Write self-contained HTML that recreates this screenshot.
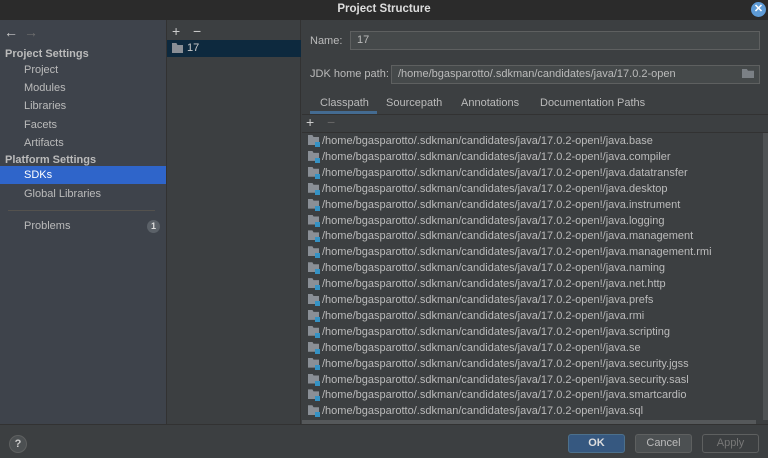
<!DOCTYPE html>
<html><head><meta charset="utf-8"><style>
*{margin:0;padding:0;box-sizing:border-box}
body{width:768px;height:458px;overflow:hidden;background:#3c3f41;font-family:"Liberation Sans",sans-serif;font-size:11px;color:#bbbbbb;position:relative}
.a{position:absolute;white-space:nowrap}
.title{left:0;top:0;width:768px;height:20px;background:#2b2b2b;color:#ddd;font-weight:bold;text-align:center;line-height:19px;font-size:11.5px}
.side{left:0;top:20px;width:166px;height:404px;background:#3e434b}
.mid{left:166px;top:20px;width:135px;height:404px;background:#3c3f41;border-left:1px solid #323232;border-right:1px solid #323232}
.in{background:#45494a;border:1px solid #5e6060;color:#bbb;padding-left:6px;line-height:17px}
.row{left:308px;height:16px;line-height:16px;font-size:11px;color:#bbb}
.ic{display:inline-block;width:11px;height:10px;background:#8a8f96;position:relative;vertical-align:-1px;margin-right:3px;clip-path:polygon(0 0,40% 0,50% 20%,100% 20%,100% 100%,0 100%)}
.ic2{position:absolute;width:6px;height:6px;background:#3592c4}
.btn{top:434px;height:19px;width:57px;border:1px solid #5e6060;border-radius:3px;text-align:center;line-height:17px;background:#4c5052}
</style></head><body>
<div class="a title">Project Structure</div>
<div class="a" style="left:751px;top:2px;width:15px;height:15px;border-radius:50%;background:#5e9bd6;color:#fff;text-align:center;line-height:15px;font-size:11px;font-weight:bold">✕</div>
<div class="a side"></div>
<div class="a" style="left:4px;top:24px;font-size:14px;color:#ccc">←</div>
<div class="a" style="left:24px;top:24px;font-size:14px;color:#6e6e6e">→</div>
<div class="a" style="left:5px;top:48px;font-weight:bold">Project Settings</div>
<div class="a" style="left:24px;top:64px">Project</div>
<div class="a" style="left:24px;top:82px">Modules</div>
<div class="a" style="left:24px;top:100px">Libraries</div>
<div class="a" style="left:24px;top:119px">Facets</div>
<div class="a" style="left:24px;top:137px">Artifacts</div>
<div class="a" style="left:5px;top:154px;font-weight:bold">Platform Settings</div>
<div class="a" style="left:0;top:166px;width:166px;height:18px;background:#2f65ca"></div>
<div class="a" style="left:24px;top:169px;color:#fff">SDKs</div>
<div class="a" style="left:24px;top:188px">Global Libraries</div>
<div class="a" style="left:8px;top:210px;width:147px;height:1px;background:#54524e"></div>
<div class="a" style="left:24px;top:220px">Problems</div>
<div class="a" style="left:147px;top:220px;width:13px;height:13px;border-radius:50%;background:#5b6168;color:#ddd;font-size:9px;text-align:center;line-height:13px;font-weight:bold">1</div>
<div class="a mid"></div>
<div class="a" style="left:172px;top:23px;font-size:14px;color:#ccc">+</div>
<div class="a" style="left:193px;top:23px;font-size:14px;color:#ccc">−</div>
<div class="a" style="left:167px;top:40px;width:134px;height:17px;background:#0d293e"></div>
<div class="a" style="left:172px;top:43px"><span class="ic"></span></div>
<div class="a" style="left:187px;top:42px;color:#ccc">17</div>
<div class="a" style="left:310px;top:35px">Name:</div>
<div class="a in" style="left:350px;top:31px;width:410px;height:19px">17</div>
<div class="a" style="left:310px;top:68px">JDK home path:</div>
<div class="a in" style="left:391px;top:65px;width:369px;height:19px">/home/bgasparotto/.sdkman/candidates/java/17.0.2-open</div>
<div class="a" style="left:742px;top:69px;width:12px;height:9px;background:#7b8085;clip-path:polygon(0 0,40% 0,50% 20%,100% 20%,100% 100%,0 100%)"></div>
<div class="a" style="left:320px;top:97px">Classpath</div>
<div class="a" style="left:386px;top:97px">Sourcepath</div>
<div class="a" style="left:461px;top:97px">Annotations</div>
<div class="a" style="left:540px;top:97px">Documentation Paths</div>
<div class="a" style="left:310px;top:111px;width:67px;height:3px;background:#4a88c7;opacity:.6"></div>
<div class="a" style="left:302px;top:114px;width:466px;height:1px;background:#323232"></div>
<div class="a" style="left:306px;top:114px;font-size:14px;color:#ccc">+</div>
<div class="a" style="left:327px;top:114px;font-size:14px;color:#666">−</div>
<div class="a" style="left:302px;top:132px;width:466px;height:292px;background:#3c3f41;border-top:1px solid #323232"></div>
<div class="a" style="left:763px;top:133px;width:5px;height:287px;background:#4f5254"></div>
<div class="a" style="left:302px;top:420px;width:454px;height:4px;background:#55585a"></div>
<div id="rows"></div>
<script>
var n=["java.base","java.compiler","java.datatransfer","java.desktop","java.instrument","java.logging","java.management","java.management.rmi","java.naming","java.net.http","java.prefs","java.rmi","java.scripting","java.se","java.security.jgss","java.security.sasl","java.smartcardio","java.sql"];
var h="";for(var i=0;i<n.length;i++){h+='<div class="a row" style="top:'+(133+i*15.9)+'px"><span class="ic"></span><span class="a" style="left:7px;top:9px;width:5px;height:5px;background:#3592c4"></span>/home/bgasparotto/.sdkman/candidates/java/17.0.2-open!/'+n[i]+'</div>';}
document.getElementById("rows").innerHTML=h;
</script>
<div class="a" style="left:0;top:424px;width:768px;height:1px;background:#323232"></div>
<div class="a" style="left:9px;top:435px;width:18px;height:18px;border-radius:50%;background:#4c5052;border:1px solid #5e6060;text-align:center;line-height:16px;color:#ccc;font-weight:bold">?</div>
<div class="a btn" style="left:568px;background:#365880;border-color:#4c708c;color:#ddd;font-weight:bold">OK</div>
<div class="a btn" style="left:635px">Cancel</div>
<div class="a btn" style="left:702px;background:#3c3f41;color:#777">Apply</div>
</body></html>
